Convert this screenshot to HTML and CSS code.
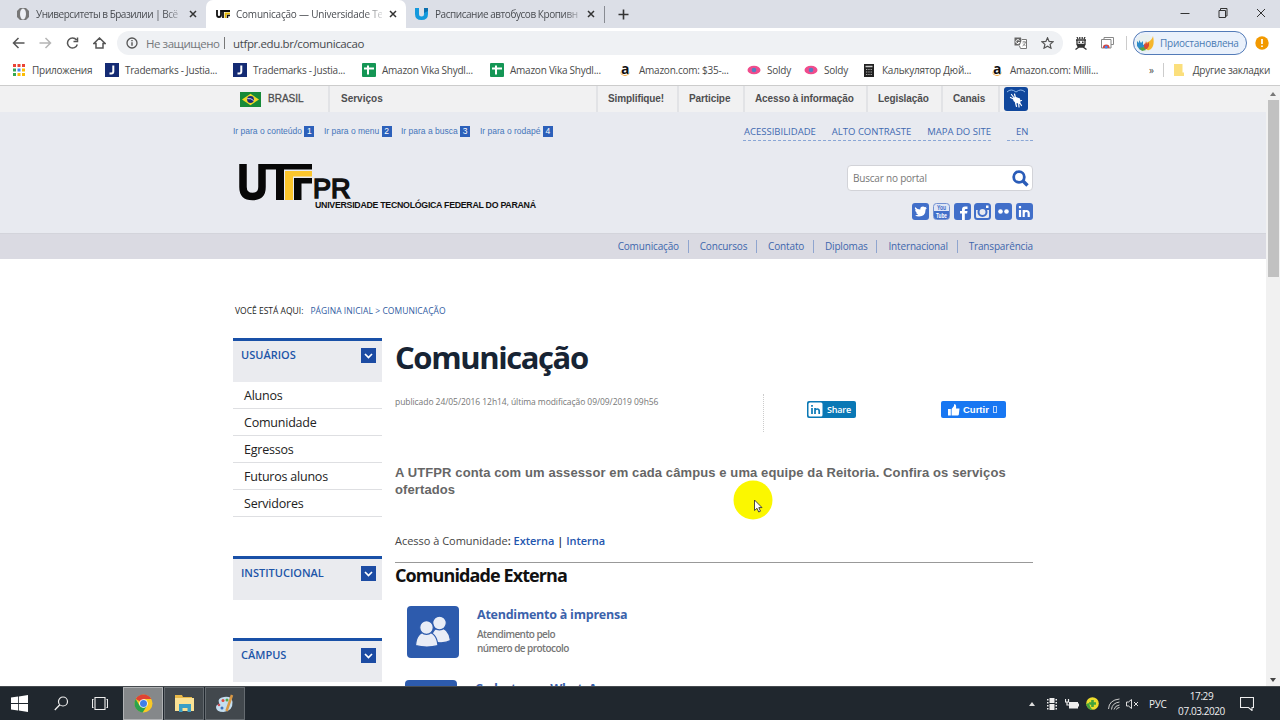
FILE: index.html
```html
<!DOCTYPE html>
<html lang="pt-br">
<head>
    <meta charset="UTF-8">
    <meta name="viewport" content="width=device-width, initial-scale=1.0">
    <title>Comunicação — Universidade Tecnológica Federal do Paraná</title>
    <link rel="stylesheet" href="styles.css">
</head>
<body>
    <!-- tabs -->
    <div class="tabs">
        <div class="tab tab-first">
            <svg width="14" height="14" viewBox="0 0 14 14"><path fill="#777" d="M4 1h6l3 3v6l-3 3H4l-3-3V4z"/><ellipse cx="7" cy="7" rx="3" ry="5.5" fill="#eef0f5"/></svg>
            <span class="tab-title t1">Университеты в Бразилии | Всё</span>
            <svg class="close" width="8" height="8" viewBox="0 0 8 8"><path d="M1 1l6 6M7 1L1 7"/></svg>
        </div>
        <div class="tab tab-active">
            <svg width="14" height="8" viewBox="0 0 14 8"><path d="M1 0v5q0 2 2 2t2-2V0M5 1h9M7 1v7" fill="none" stroke="#111" stroke-width="1.8"/><path d="M9.5 8V3.5H14" fill="none" stroke="#e6b800" stroke-width="1.8"/><path d="M11.5 8V5.5H14" fill="none" stroke="#111" stroke-width="1.4"/></svg>
            <span class="tab-title t2">Comunicação — Universidade Te</span>
            <svg class="close" width="8" height="8" viewBox="0 0 8 8"><path d="M1 1l6 6M7 1L1 7"/></svg>
        </div>
        <div class="tab tab-last">
            <svg width="15" height="14" viewBox="0 0 15 14"><path fill="#1499dc" d="M1 1h4v6q0 2.500 2.500 2.500T10 7V1h4v6q0 6-6.500 6T1 7z"/><path fill="#0b6fae" d="M10 1h4v3l-4 2z"/></svg>
            <span class="tab-title t3">Расписание автобусов Кропивн</span>
            <svg class="close" width="8" height="8" viewBox="0 0 8 8"><path d="M1 1l6 6M7 1L1 7"/></svg>
        </div>
        <svg class="new-tab" width="11" height="11" viewBox="0 0 11 11"><path d="M5.500 0.500v10M0.500 5.500h10" stroke="#333" stroke-width="1.600"/></svg>
        <div class="window-buttons">
            <svg width="10" height="10" viewBox="0 0 10 10"><path d="M0.500 5.500h9"/></svg>
            <svg width="10" height="10" viewBox="0 0 10 10"><path d="M1 2.500h6.500V9.500H1zM2.500 2.500V0.500H9v7.500H7.500"/></svg>
            <svg width="10" height="10" viewBox="0 0 10 10"><path d="M1 1l8 8M9 1L1 9"/></svg>
        </div>
    </div>

    <!-- toolbar -->
    <div class="toolbar">
        <div class="nav-buttons">
            <svg width="13" height="12" viewBox="0 0 13 12"><path d="M12.500 6H1.500M6.500 1L1.500 6l5 5"/></svg>
            <svg class="off" width="13" height="12" viewBox="0 0 13 12"><path d="M0.500 6h11M6.500 1l5 5-5 5"/></svg>
            <svg width="13" height="12" viewBox="0 0 13 12"><path d="M10.500 3A5 5 0 1 0 11.300 7.500M11.500 0.500V4.500H7.500"/></svg>
            <svg width="13" height="12" viewBox="0 0 13 12"><path d="M0.800 6.500L6.500 1l5.700 5.500H10V11H3V6.500z"/></svg>
        </div>
        <div class="omnibox">
            <svg width="12" height="12" viewBox="0 0 12 12"><circle cx="6" cy="6" r="5" fill="none" stroke="#555" stroke-width="1.300"/><path d="M6 5.200v3.500M6 3v1.200" stroke="#555" stroke-width="1.400"/></svg>
            <span class="unsafe">Не защищено</span>
            <span class="bar"></span>
            <span class="url">utfpr.edu.br/comunicacao</span>
            <svg class="translate" width="13" height="12" viewBox="0 0 13 12"><path fill="#666" d="M0.500 0.500h6.500l1.500 8H0.500z"/><path d="M8 2.500h4.500v9H6.500l-1-2.500" fill="#fff" stroke="#777"/><path d="M5.500 3.500a2 2 0 1 0 .2 2H4" fill="none" stroke="#fff"/><path d="M8.500 5h3.500M10 4v1M11.500 5q-.5 3-3 4M9 6.500l2.500 2.500" stroke="#777" fill="none" stroke-width=".8"/></svg>
            <svg width="13" height="12" viewBox="0 0 13 12"><path d="M6.500 0.800l1.600 3.600 4 .4-3 2.600.9 3.800-3.500-2-3.500 2 .9-3.800-3-2.600 4-.4z" fill="none" stroke="#555" stroke-width="1.200"/></svg>
        </div>
        <svg class="ext" width="12" height="13" viewBox="0 0 12 13"><path d="M2 0l1 2M4.800 0v2M7.200 0v2M10 0L9 2M1 3h10M2 3v4.500h8V3M2 9h8M0.500 12.500L4 10h4l3.500 2.500" fill="none" stroke="#333" stroke-width="1.300"/><path d="M3.500 5.200h1.600M7 5.200h1.600" stroke="#333" stroke-width="1.400"/></svg>
        <svg class="ext2" width="13" height="12" viewBox="0 0 13 12"><path d="M3 2.500V0.500h9.500v7H10" fill="none" stroke="#888"/><path d="M0.500 2.500H10V11H0.500z" fill="#fff" stroke="#888"/><path d="M1.800 11a3.400 3.400 0 0 1 6.800 0" fill="#d8453a"/><circle cx="5.200" cy="10" r="1.500" fill="#4285f4"/></svg>
        <span class="tool-sep"></span>
        <div class="profile">
            <svg width="18" height="18" viewBox="0 0 18 18"><circle cx="9" cy="9" r="9" fill="#e9f0ef"/><path fill="#f5b62c" d="M8 13q0-4 4-5 4-2 5-6 2 9-2 13-4 3-7-2"/><path fill="#2d8bc9" d="M1 7l2 2V6l2 3 2-2v4l2-1-2 5-3 1-3-4z"/><path fill="#d94a35" d="M8 9l1 2 1-4 1 3 2-2v4l-2 3H8z"/><path fill="#56a245" d="M3 14l5-1 2 3-4 1z"/></svg>
            <span>Приостановлена</span>
        </div>
        <svg class="alert" width="14" height="14" viewBox="0 0 14 14"><circle cx="7" cy="7" r="6.700" fill="#f29900"/><path d="M7 3v5M7 9.500v1.500" stroke="#fff" stroke-width="1.700"/></svg>
    </div>

    <!-- bookmarks -->
    <div class="bookmarks">
        <div class="bm b1"><svg width="12" height="12" viewBox="0 0 12 12"><path fill="#ea4335" d="M0 0h3v3H0zM4.500 0h3v3h-3zM9 0h3v3H9z"/><path fill="#34a853" d="M0 4.500h3v3H0z"/><path fill="#4285f4" d="M4.500 4.500h3v3h-3z"/><path fill="#fbbc05" d="M9 4.500h3v3H9zM4.500 9h3v3h-3zM9 9h3v3H9z"/><path fill="#34a853" d="M0 9h3v3H0z"/></svg><span>Приложения</span></div>
        <div class="bm b2"><svg width="14" height="14" viewBox="0 0 14 14"><path fill="#142b74" d="M0 0h14v14H0z"/><path d="M8.300 2.500V8.500q0 2-2 2H4.500" fill="none" stroke="#fff" stroke-width="2"/></svg><span>Trademarks - Justia...</span></div>
        <div class="bm b3"><svg width="14" height="14" viewBox="0 0 14 14"><path fill="#142b74" d="M0 0h14v14H0z"/><path d="M8.300 2.500V8.500q0 2-2 2H4.500" fill="none" stroke="#fff" stroke-width="2"/></svg><span>Trademarks - Justia...</span></div>
        <div class="bm b4"><svg width="14" height="14" viewBox="0 0 14 14"><rect width="14" height="14" rx="1" fill="#149655"/><path d="M2 5.500h10M6 2.500v9" stroke="#fff" stroke-width="2"/></svg><span>Amazon Vika Shydl...</span></div>
        <div class="bm b5"><svg width="14" height="14" viewBox="0 0 14 14"><rect width="14" height="14" rx="1" fill="#149655"/><path d="M2 5.500h10M6 2.500v9" stroke="#fff" stroke-width="2"/></svg><span>Amazon Vika Shydl...</span></div>
        <div class="bm b6"><b class="amazon">a</b><span>Amazon.com: $35-...</span></div>
        <div class="bm b7"><svg width="14" height="10" viewBox="0 0 14 10"><ellipse cx="7" cy="5" rx="6.500" ry="4.300" fill="#f04c8c"/><circle cx="7" cy="5" r="2.300" fill="#557fc0"/></svg><span>Soldy</span></div>
        <div class="bm b8"><svg width="14" height="10" viewBox="0 0 14 10"><ellipse cx="7" cy="5" rx="6.500" ry="4.300" fill="#f04c8c"/><circle cx="7" cy="5" r="2.300" fill="#557fc0"/></svg><span>Soldy</span></div>
        <div class="bm b9"><svg width="10" height="13" viewBox="0 0 10 13"><path fill="#222" d="M0 0h10v13H0z"/><path d="M1.500 2.500h7" stroke="#ccc" stroke-width="1.500"/><path d="M2 5.500h6M2 8h6M2 10.500h6" stroke="#aaa" stroke-dasharray="1.300 1"/></svg><span>Калькулятор Дюй...</span></div>
        <div class="bm b10"><b class="amazon">a</b><span>Amazon.com: Milli...</span></div>
        <span class="more">»</span>
        <span class="tool-sep"></span>
        <div class="bm b11"><svg width="10" height="12" viewBox="0 0 10 12"><path fill="#fbdf7c" d="M0 0h8.500v8.500H10V12H0z"/></svg><span>Другие закладки</span></div>
    </div>

    <div class="window">
        <div class="page">
            <div class="gov-bar">
                <div class="wrap">
                    <div class="gov brasil">
                        <svg width="21" height="15" viewBox="0 0 21 15"><path fill="#178a38" d="M0 0h21v15H0z"/><path fill="#f2d926" d="M10.500 1.800L19 7.500l-8.500 5.700L2 7.500z"/><circle cx="10.500" cy="7.500" r="3.400" fill="#1d2a78"/><path d="M7.300 6.600q4-.6 6.300 2" stroke="#fff" fill="none" stroke-width=".8"/></svg>
                        <span>BRASIL</span>
                    </div>
                    <div class="gov servicos">Serviços</div>
                    <div class="gov g1">Simplifique!</div>
                    <div class="gov g2">Participe</div>
                    <div class="gov g3">Acesso à informação</div>
                    <div class="gov g4">Legislação</div>
                    <div class="gov g5">Canais</div>
                    <div class="gov libras">
                        <svg width="24" height="24" viewBox="0 0 24 24"><rect width="24" height="24" rx="3" fill="#10479c"/><path d="M3 5q4-4 9 0 5-4 9 0" fill="none" stroke="#9cc4f0" stroke-width=".9"/><path d="M7.500 7.500l3 4M6.500 10.500l4 2M10.500 7l1 4M12.500 19.500l-1-4M15 20l-.5-5M17.500 18.500l-2-3M17.500 13.500l-2 .5" stroke="#fff" stroke-width="1.200" stroke-linecap="round"/><path fill="#fff" d="M9 11l3-1 4 1.500.5 4-4 1-3-2.500z"/></svg>
                    </div>
                </div>
            </div>

            <div class="header">
                <div class="wrap top-links">
                    <div class="skip s1">Ir para o conteúdo <b>1</b></div>
                    <div class="skip s2">Ir para o menu <b>2</b></div>
                    <div class="skip s3">Ir para a busca <b>3</b></div>
                    <div class="skip s4">Ir para o rodapé <b>4</b></div>
                    <div class="access"><span>ACESSIBILIDADE</span><span>ALTO CONTRASTE</span><span>MAPA DO SITE</span></div>
                    <div class="lang">EN</div>
                </div>
                <div class="wrap brand">
                    <div class="logo">
                        <div class="logo-row">
                            <svg width="73" height="37" viewBox="0 0 73 37"><path d="M4 0v23q0 9.500 9.500 9.500T23 23V0" fill="none" stroke="#070707" stroke-width="7.500"/><path fill="#070707" d="M20 0h54v5.500H45V36h-8V5.500H20z"/><path fill="#fbc52c" d="M46 7h27v5.500H54V36h-8z"/><path fill="#070707" d="M55 14h18v5.500H62.500V36H55z"/></svg>
                            <span>PR</span>
                        </div>
                        <div class="logo-name">UNIVERSIDADE TECNOLÓGICA FEDERAL DO PARANÁ</div>
                    </div>
                    <div class="tools">
                        <div class="search">
                            <span>Buscar no portal</span>
                            <svg width="17" height="17" viewBox="0 0 17 17"><circle cx="7" cy="7" r="5.300" fill="none" stroke="#2a5cb8" stroke-width="2.800"/><path d="M11 11l4.500 4.500" stroke="#2a5cb8" stroke-width="3.400"/></svg>
                        </div>
                        <div class="social">
                            <svg width="17" height="17" viewBox="0 0 17 17"><rect width="17" height="17" rx="3"/><path fill="#fff" d="M3 4q2.500 2.500 5.300 2.500Q8 3.500 11 3.500q1.200 0 2 .8l1.500-.5-.8 1.500 1.300-.3-1.400 1.500Q13.500 13.500 7 13.500q-2.400 0-4-1.200 2 .1 3.300-1-2-.3-2.300-1.700h1Q3.200 8.800 3 7l1 .3Q2.300 5.800 3 4z"/></svg>
                            <svg width="17" height="17" viewBox="0 0 17 17"><rect x=".5" y=".5" width="16" height="16" rx="3" fill="#dfe6f5" stroke="#7291d1"/><path d="M1 8h15v6q0 2-2 2H3q-2 0-2-2z"/><text x="8.500" y="7" font-size="7" text-anchor="middle" textLength="9" lengthAdjust="spacingAndGlyphs">You</text><text x="8.500" y="14.500" font-size="7" text-anchor="middle" textLength="11" lengthAdjust="spacingAndGlyphs" class="white">Tube</text></svg>
                            <svg width="17" height="17" viewBox="0 0 17 17"><rect width="17" height="17" rx="3"/><path fill="#fff" d="M8 17v-6.500H6V8h2V6.500Q8 3.500 11 3.500h2.500V6h-1.700q-1 0-1 1v1h2.700l-.4 2.500h-2.300V17z"/></svg>
                            <svg width="17" height="17" viewBox="0 0 17 17"><rect x="1" y="1" width="15" height="15" rx="2.500" fill="none" stroke="#416fc9" stroke-width="2"/><path d="M1 1h15v6h-4q-3-3-7 0H1z"/><circle cx="8.500" cy="9" r="4" fill="#e8eaf0" stroke="#416fc9" stroke-width="2"/><path fill="#fff" d="M12 2.500h2.500V5H12z"/></svg>
                            <svg width="17" height="17" viewBox="0 0 17 17"><rect width="17" height="17" rx="3"/><circle cx="5.500" cy="8.500" r="2.300" fill="#fff"/><circle cx="11.500" cy="8.500" r="2.300" fill="#fff"/></svg>
                            <svg width="17" height="17" viewBox="0 0 17 17"><rect width="17" height="17" rx="3"/><path d="M4 7v7M4 3v2.300M7.700 14V7M7.700 10q.5-2 2.600-2 2.400 0 2.400 2.500V14" fill="none" stroke="#fff" stroke-width="2.200"/></svg>
                        </div>
                    </div>
                </div>
            </div>

            <div class="portal-nav">
                <div class="wrap">
                    <span>Comunicação</span><span>Concursos</span><span>Contato</span><span>Diplomas</span><span>Internacional</span><span>Transparência</span>
                </div>
            </div>

            <div class="wrap breadcrumb"><span class="here">VOCÊ ESTÁ AQUI:</span><span class="path">PÁGINA INICIAL &gt; COMUNICAÇÃO</span></div>

            <div class="wrap columns">
                <div class="sidebar">
                    <div class="menu">
                        <div class="menu-title"><span>USUÁRIOS</span><svg width="15" height="15" viewBox="0 0 15 15"><path fill="#1c4ba3" d="M0 0h15v15H0z"/><path d="M4 6l3.500 3.500L11 6" fill="none" stroke="#fff" stroke-width="1.700"/></svg></div>
                        <ul>
                            <li>Alunos</li>
                            <li>Comunidade</li>
                            <li>Egressos</li>
                            <li>Futuros alunos</li>
                            <li>Servidores</li>
                        </ul>
                    </div>
                    <div class="menu">
                        <div class="menu-title"><span>INSTITUCIONAL</span><svg width="15" height="15" viewBox="0 0 15 15"><path fill="#1c4ba3" d="M0 0h15v15H0z"/><path d="M4 6l3.500 3.500L11 6" fill="none" stroke="#fff" stroke-width="1.700"/></svg></div>
                    </div>
                    <div class="menu">
                        <div class="menu-title"><span>CÂMPUS</span><svg width="15" height="15" viewBox="0 0 15 15"><path fill="#1c4ba3" d="M0 0h15v15H0z"/><path d="M4 6l3.500 3.500L11 6" fill="none" stroke="#fff" stroke-width="1.700"/></svg></div>
                    </div>
                </div>

                <div class="content">
                    <h1>Comunicação</h1>
                    <div class="byline">
                        <span class="date">publicado 24/05/2016 12h14, última modificação 09/09/2019 09h56</span>
                        <div class="share">
                            <div class="in-share"><svg width="15" height="15" viewBox="0 0 15 15"><rect x=".5" y=".5" width="14" height="14" rx="1.500" fill="#fff"/><path d="M4 6v6M4 3v1.700M7 12V6M7 8.500Q7.300 7 9.200 7q2 0 2 2.200V12" fill="none" stroke="#0a78b5" stroke-width="1.700"/></svg><span>Share</span></div>
                            <div class="fb-like"><svg width="12" height="12" viewBox="0 0 12 12"><path fill="#fff" d="M0 5h2.800v6.500H0zM3.600 5L6 2V.3h1q1.500.5 1 4.200h3.500l-.7 6.300-.8.700H3.600z"/></svg><b>Curtir</b><i></i></div>
                        </div>
                    </div>
                    <p class="description">A UTFPR conta com um assessor em cada câmpus e uma equipe da Reitoria. Confira os serviços<br>ofertados</p>
                    <p class="links">Acesso à Comunidade<b>: <a>Externa</a> | <a>Interna</a></b></p>
                    <h2>Comunidade Externa</h2>
                    <div class="card">
                        <svg width="52" height="52" viewBox="0 0 52 52"><rect width="52" height="52" rx="4" fill="#2d5bad"/><g fill="#e9edf6" stroke="#2d5bad" stroke-width="1.200"><path d="M24 37q0-15 8.500-15Q42 22 43.500 34.500q-5 3-13 2z"/><circle cx="32.500" cy="17" r="6.800"/><path d="M8.500 39.500Q9.500 26 19.500 26T31 39.500q-11 3-22.500 0z"/><circle cx="19.500" cy="21.500" r="6.800"/></g></svg>
                        <div class="card-text">
                            <h3>Atendimento à imprensa</h3>
                            <p>Atendimento pelo<br>número de protocolo</p>
                        </div>
                    </div>
                    <div class="card card-next">
                        <svg width="52" height="52" viewBox="0 0 52 52"><rect width="52" height="52" rx="4" fill="#2d5bad"/></svg>
                        <div class="card-text">
                            <h3>Cadastre no WhatsApp</h3>
                        </div>
                    </div>
                </div>
            </div>
        </div>
        <div class="scrollbar">
            <i class="arrow-up"></i>
            <div class="thumb"></div>
            <i class="arrow-down"></i>
        </div>
        <svg class="pointer" width="40" height="40" viewBox="0 0 40 40"><circle cx="20" cy="20" r="19.500" fill="#fbf700"/><path d="M21.500 20v10.500l2.500-2.200 1.700 3.700 1.800-.8-1.700-3.600h3.200z" fill="#fff" stroke="#333" stroke-width=".9"/></svg>
    </div>

    <!-- taskbar -->
    <div class="taskbar">
        <div class="task start"><svg width="17" height="17" viewBox="0 0 17 17"><path fill="#fff" d="M0 2.500l7-1v6.600H0zM7.800 1.400L17 0v8.100H7.800zM0 8.900h7v6.600l-7-1zM7.800 8.900H17V17l-9.200-1.400z"/></svg></div>
        <div class="task"><svg width="15" height="15" viewBox="0 0 15 15"><circle cx="9" cy="5.500" r="4.500" fill="none" stroke="#eee" stroke-width="1.200"/><path d="M5.800 8.800L.8 14" stroke="#eee" stroke-width="1.300"/></svg></div>
        <div class="task view"><svg width="16" height="13" viewBox="0 0 16 13"><path d="M3 .5h10v12H3zM1.500 2.500h-1v8h1M14.500 2.500h1v8h-1" fill="none" stroke="#eee" stroke-width="1.100"/></svg></div>
        <div class="task app app-on"><svg width="19" height="19" viewBox="0 0 19 19"><circle cx="9.500" cy="9.500" r="9" fill="#f9c926"/><path fill="#df4334" d="M9.500 9.500L1.700 5A9 9 0 0 1 17.300 5H9.500z"/><path fill="#2ba24c" d="M1.700 5A9 9 0 0 0 8.700 18.500L13 11.500 9.500 9.500 5.500 11.500z"/><circle cx="9.500" cy="9.500" r="4.300" fill="#fff"/><circle cx="9.500" cy="9.500" r="3.500" fill="#3f7fe8"/></svg></div>
        <div class="task app"><svg width="19" height="17" viewBox="0 0 19 17"><path fill="#e9b949" d="M0 0h7l1 2h9v3H0z"/><path fill="#fbe295" d="M0 3h19v13H0z"/><path fill="#3a9fc6" d="M4 9h12v8h-3.500v-4h-5v4H4z"/></svg></div>
        <div class="task app"><svg width="20" height="19" viewBox="0 0 20 19"><path fill="#c4def0" d="M9 3q8-1 8.500 5 .5 9-9 10Q1 18 1 13q0-2 2-2.500t1-1.500Q2 4 9 3z"/><circle cx="8" cy="6.500" r="1.500" fill="#df4b3d"/><circle cx="4" cy="11" r="1.300" fill="#ca4d56"/><circle cx="12" cy="6" r="1.500" fill="#54a84c"/><circle cx="7" cy="14" r="1.500" fill="#3f72bd"/><path d="M17 1L11.500 17" stroke="#d99845" stroke-width="2.500"/></svg></div>
        <div class="tray">
            <i class="tray-up"></i>
            <svg class="y1" width="10" height="12" viewBox="0 0 10 12"><path fill="#eee" d="M2.500 0h5v5h-5zM2.500 6h5v6h-5zM0 1h1.500v1.500H0zM0 4h1.500v1.500H0zM0 7h1.500v1.500H0zM0 10h1.500v1.500H0zM8.500 1H10v1.500H8.500zM8.500 4H10v1.500H8.500zM8.500 7H10v1.500H8.500zM8.500 10H10v1.500H8.500z"/></svg>
            <svg class="y2" width="14" height="10" viewBox="0 0 14 10"><path fill="#eee" d="M4 3h9v6.500H4zM13 4.500h1v3h-1z"/><path d="M.5 0v3h3V0M2 3v3h3" fill="none" stroke="#eee" stroke-width="1.200"/></svg>
            <svg class="y3" width="13" height="13" viewBox="0 0 13 13"><circle cx="6.500" cy="6.500" r="6.300" fill="#eddc2c"/><path fill="#42a33b" d="M0 7q2 6 7 6-3-2-4-7zM5.200 3h2.600v2.200H10v2.600H7.800V10H5.200V7.800H3V5.200h2.200z"/></svg>
            <svg class="y4" width="12" height="12" viewBox="0 0 12 12"><path d="M.5 11Q1 2 11.500 1M3.500 11.500Q4 5 11.500 4M6 11.500Q7 7.500 11.500 7M8.500 11.500q.5-2 3-2" fill="none" stroke="#ccc"/></svg>
            <svg class="y5" width="13" height="10" viewBox="0 0 13 10"><path d="M.5 3h2l3-2.500v9L2.500 7h-2zM8 3l4 4M12 3L8 7" fill="none" stroke="#ddd"/></svg>
            <span class="kbd">РУС</span>
            <div class="clock"><div class="time">17:29</div><div class="day">07.03.2020</div></div>
            <svg class="y6" width="14" height="14" viewBox="0 0 14 14"><path d="M.5.500h13v10H12v3L8.500 10.500h-8z" fill="none" stroke="#eee" stroke-width="1.100"/></svg>
        </div>
    </div>
</body>
</html>
```
FILE: styles.css
```css
* {
    box-sizing: border-box;
}

body {
    display: flex;
    flex-direction: column;
    height: 720px;
    margin: 0;
    overflow: hidden;
    background-color: #fff;
    font-family: "Open Sans", "Noto Sans", sans-serif;
    white-space: nowrap;
}

svg {
    display: block;
    flex-shrink: 0;
}

h1, h2, h3, p, ul {
    margin: 0;
    padding: 0;
}

/* Browser tabs */
.tabs {
    display: flex;
    align-items: center;
    height: 28px;
    flex-shrink: 0;
    background-color: #dcdfe7;
}

.tab {
    display: flex;
    align-items: center;
    height: 28px;
    font-size: 10px;
    color: #4a4d52;
}

.tab-first {
    width: 206px;
    padding-left: 16px;
}

.tab-active {
    width: 200px;
    padding-left: 10px;
    border-radius: 7px 7px 0 0;
    background-color: #fff;
}

.tab-last {
    width: 199px;
    height: 17px;
    padding-left: 8px;
    border-right: 1px solid #888b92;
}

.tab-title {
    width: 146px;
    margin: 0 7px 0 6px;
    -webkit-mask-image: linear-gradient(90deg, #000 88%, rgba(0, 0, 0, .2));
}

.t1 { letter-spacing: -.5px; }
.t2 { letter-spacing: -.22px; }
.t3 { margin-right: 6px; letter-spacing: -.45px; }

.close {
    fill: none;
    stroke: #333;
    stroke-width: 1.5;
}

.new-tab {
    margin-left: 13px;
}

.window-buttons {
    display: flex;
    gap: 28px;
    margin: -3px 14px 0 auto;
    fill: none;
    stroke: #333;
}

/* Toolbar */
.toolbar {
    display: flex;
    align-items: center;
    height: 30px;
    flex-shrink: 0;
}

.nav-buttons {
    display: flex;
    gap: 14px;
    width: 117px;
    padding-left: 12px;
    fill: none;
    stroke: #555;
    stroke-width: 1.5;
}

.nav-buttons .off {
    stroke: #b5b5b5;
}

.omnibox {
    display: flex;
    align-items: center;
    width: 946px;
    height: 24px;
    padding-left: 9px;
    border-radius: 12px;
    background-color: #eff1f4;
    font-size: 11.5px;
}

.unsafe {
    width: 74px;
    margin-left: 8px;
    color: #74777b;
    letter-spacing: -.45px;
}

.bar {
    width: 1px;
    height: 12px;
    margin: 0 8px 0 4px;
    background-color: #777;
}

.url {
    color: #46494d;
    letter-spacing: -.38px;
}

.translate {
    margin: 0 14px 0 auto;
}

.omnibox svg:last-child {
    margin-right: 9px;
}

.ext {
    margin-left: 12px;
}

.ext2 {
    margin-left: 14px;
}

.tool-sep {
    width: 1px;
    height: 14px;
    background-color: #ccc;
}

.toolbar .tool-sep {
    margin: 0 6px 0 12px;
}

.profile {
    display: flex;
    align-items: center;
    gap: 6px;
    width: 114px;
    height: 24px;
    padding-left: 2px;
    border: 1px solid #537bb8;
    border-radius: 12px;
    background-color: #eaf1fb;
    color: #4b7cb4;
    font-size: 10px;
    letter-spacing: -.25px;
}

.alert {
    margin-left: 8px;
}

/* Bookmarks */
.bookmarks {
    display: flex;
    align-items: center;
    height: 28px;
    padding: 0 0 3px 13px;
    flex-shrink: 0;
    border-bottom: 1px solid #ccc;
    color: #4a4a4a;
    font-size: 10px;
    letter-spacing: -.24px;
}

.bm {
    display: flex;
    align-items: center;
    gap: 6px;
}

.b1 { width: 92px; gap: 7px; }
.b2 { width: 128px; }
.b3 { width: 129px; }
.b4 { width: 128px; }
.b5 { width: 130px; }
.b6 { width: 127px; gap: 9px; }
.b7 { width: 57px; }
.b8 { width: 60px; }
.b9 { width: 128px; gap: 8px; }
.b10 { width: 157px; gap: 8px; }
.b11 { gap: 9px; }

.amazon {
    width: 10px;
    height: 12px;
    border-bottom: 1px solid #eda33a;
    border-radius: 0 0 5px 5px;
    color: #111;
    font-size: 14px;
    line-height: 9px;
    text-align: center;
}

.bookmarks .tool-sep {
    margin: 0 10px 0 9px;
}

/* Page area */
.window {
    display: flex;
    position: relative;
    height: 600px;
    flex-shrink: 0;
    overflow: hidden;
}

.page {
    width: 1266px;
    height: 600px;
    overflow: hidden;
}

.wrap {
    display: flex;
    width: 800px;
    margin: 0 auto;
}

.gov-bar {
    height: 26px;
    background-color: #f1f1f2;
}

.gov {
    height: 26px;
    padding-left: 10px;
    border-left: 2px solid #e2e3e6;
    color: #4e4e50;
    font-family: "Liberation Sans", sans-serif;
    font-size: 10px;
    font-weight: bold;
    letter-spacing: -.1px;
    line-height: 26px;
}

.brasil {
    display: flex;
    align-items: center;
    gap: 7px;
    width: 95px;
    padding-left: 7px;
    border-left: none;
    font-weight: normal;
    letter-spacing: 0;
    -webkit-text-stroke: .3px #4e4e50;
}

.servicos {
    width: 268px;
    padding-left: 11px;
    letter-spacing: 0;
}

.g1 { width: 81px; }
.g2 { width: 66px; }
.g3 { width: 123px; }
.g4 { width: 75px; }
.g5 { width: 57px; }

.libras {
    padding: 1px 0 0 4px;
}

/* Header */
.header {
    height: 121px;
    background-color: #e8eaf0;
}

.top-links {
    align-items: center;
    height: 38px;
    font-size: 9.5px;
}

.skip {
    color: #4575ba;
    font-family: "Liberation Sans", sans-serif;
    font-size: 8.5px;
}

.skip b {
    display: inline-block;
    width: 10px;
    height: 11px;
    background-color: #2c60ba;
    color: #fff;
    font-weight: normal;
    line-height: 11px;
    text-align: center;
}

.s1 { width: 91px; }
.s2 { width: 77px; }
.s3 { width: 79px; }
.s4 { width: 80px; }

.access {
    display: flex;
    gap: 16px;
    width: 248px;
    height: 19px;
    margin: 0 16px 0 auto;
    padding-left: 1px;
    border-bottom: 1px dashed #8aa7d6;
    color: #3f69b0;
    line-height: 19px;
}

.lang {
    width: 26px;
    height: 19px;
    padding-left: 9px;
    border-bottom: 1px dashed #8aa7d6;
    color: #3f69b0;
    line-height: 19px;
}

.brand {
    justify-content: space-between;
}

.logo {
    width: 310px;
    padding: 14px 0 0 6px;
}

.logo-row {
    display: flex;
    align-items: flex-start;
    height: 37px;
}

.logo-row span {
    margin: 13px 0 0 1px;
    color: #111;
    font-family: "Liberation Sans", sans-serif;
    font-size: 27px;
    -webkit-text-stroke: 1.6px #111;
    line-height: 24px;
}

.logo-name {
    margin: 1px 0 0 76px;
    color: #111;
    font-family: "Liberation Sans", sans-serif;
    font-size: 8.8px;
    font-weight: bold;
    letter-spacing: -.28px;
    line-height: 7px;
}

.tools {
    padding-top: 15px;
}

.search {
    display: flex;
    align-items: center;
    justify-content: space-between;
    width: 186px;
    height: 26px;
    padding: 0 3px 0 5px;
    border: 1px solid #d2d3d8;
    border-radius: 4px;
    background-color: #fff;
    color: #777;
    font-size: 10px;
    letter-spacing: -.2px;
}

.social {
    display: flex;
    justify-content: flex-end;
    gap: 3.8px;
    margin-top: 12px;
    fill: #416fc9;
    font-family: "Liberation Sans", sans-serif;
    font-weight: bold;
}

.social .white {
    fill: #fff;
}

.portal-nav {
    height: 26px;
    border-top: 1px solid #d3d4db;
    background-color: #dadae2;
}

.portal-nav .wrap {
    align-items: center;
    justify-content: flex-end;
    height: 24px;
    color: #4067ad;
    font-size: 10px;
    letter-spacing: -.16px;
}

.portal-nav span {
    padding-left: 11px;
    line-height: 13px;
}

.portal-nav span:not(:last-child) {
    padding-right: 8.8px;
    border-right: 1px solid #8fa5cf;
}

/* Main columns */
.breadcrumb {
    height: 79px;
    padding: 44px 0 0 2px;
    color: #222;
    font-size: 8.5px;
    line-height: 16px;
}

.path {
    margin-left: 7px;
    color: #2f5b9f;
    letter-spacing: .06px;
}

.sidebar {
    width: 149px;
    margin-right: 13px;
}

.menu {
    margin-bottom: 38px;
}

.menu-title {
    display: flex;
    justify-content: space-between;
    height: 44px;
    padding: 7px 6px 0 8px;
    border-top: 3px solid #1950a7;
    background-color: #eaebef;
    color: #1d55a8;
    font-size: 11px;
    font-weight: 600;
    line-height: 13px;
}

.menu ul {
    margin-bottom: 39px;
    list-style: none;
}

.menu li {
    height: 27px;
    padding-left: 11px;
    border-bottom: 1px solid #dedfe2;
    color: #222;
    font-size: 12.5px;
    letter-spacing: -.22px;
    line-height: 27px;
}

.content {
    width: 638px;
}

h1 {
    height: 56px;
    color: #172434;
    font-size: 31px;
    letter-spacing: -1.4px;
    line-height: 38px;
}

.byline {
    display: flex;
    height: 39px;
    color: #777;
    font-size: 8.5px;
}

.date {
    width: 368px;
    letter-spacing: -.06px;
    line-height: 15px;
}

.share {
    display: flex;
    width: 243px;
    height: 38px;
    padding-top: 7px;
    border-left: 1px dotted #ccc;
}

.in-share {
    display: flex;
    align-items: center;
    width: 49px;
    height: 17px;
    margin-left: 43px;
    padding-left: 1px;
    border-radius: 2px;
    background-color: #0a78b5;
    color: #fff;
    font-size: 9px;
    font-weight: 600;
    letter-spacing: -.2px;
    gap: 4px;
}

.fb-like {
    display: flex;
    align-items: center;
    gap: 3px;
    width: 65px;
    height: 17px;
    margin-left: 85px;
    padding-left: 7px;
    border-radius: 2px;
    background-color: #1877f2;
    color: #fff;
    font-family: "Liberation Sans", sans-serif;
    font-size: 9.5px;
}

.fb-like i {
    width: 4px;
    height: 7px;
    margin-left: 1px;
    border: 1px solid #b8d4fb;
}

.description {
    height: 34px;
    margin-top: 31px;
    color: #666;
    font-family: "Liberation Sans", sans-serif;
    font-size: 13px;
    font-weight: bold;
    letter-spacing: .105px;
    line-height: 17px;
}

.links {
    height: 31px;
    margin-top: 34px;
    border-bottom: 1px solid #999;
    color: #444;
    font-size: 11px;
    letter-spacing: -.02px;
    line-height: 17px;
}

.links b {
    font-weight: 600;
    color: #222;
}

.links a {
    color: #1f56ae;
}

h2 {
    height: 43px;
    color: #111;
    font-size: 18px;
    letter-spacing: -.9px;
    line-height: 24px;
}

.card {
    display: flex;
    gap: 18px;
    height: 74px;
    padding-left: 12px;
}

.card-next {
    padding-left: 10px;
}

h3 {
    color: #3b62ab;
    font-size: 12.5px;
    letter-spacing: -.24px;
    line-height: 18px;
}

.card-text p {
    margin-top: 4px;
    color: #777;
    font-size: 10px;
    font-weight: 600;
    letter-spacing: -.55px;
    line-height: 13.5px;
}

/* Scrollbar */
.scrollbar {
    display: flex;
    flex-direction: column;
    align-items: center;
    width: 14px;
    height: 600px;
    padding: 6px 0 4px;
    background-color: #f1f1f1;
}

.thumb {
    width: 11px;
    height: 177px;
    margin-top: 4px;
    background-color: #c1c1c1;
}

.arrow-up, .arrow-down, .tray-up {
    border: 3px solid transparent;
}

.arrow-up {
    border-top: none;
    border-bottom: 4px solid #777;
}

.arrow-down {
    margin-top: auto;
    border-bottom: none;
    border-top: 4px solid #444;
}

.pointer {
    position: absolute;
    left: 733px;
    top: 394px;
}

/* Taskbar */
.taskbar {
    display: flex;
    height: 34px;
    flex-shrink: 0;
    border-top: 1px solid #454a4e;
    background-color: #20272e;
    color: #eee;
}

.task {
    display: flex;
    align-items: center;
    justify-content: center;
    width: 41px;
}

.start {
    padding-right: 2px;
}

.view {
    padding-right: 6px;
}

.app {
    width: 40px;
    margin-right: 1px;
    border: 1px solid #656b70;
    background-color: #42484d;
}

.app-on {
    border-color: #b1b3b5;
    background-color: #85888a;
}

.tray {
    display: flex;
    align-items: center;
    margin-left: auto;
    font-size: 10px;
}

.tray-up {
    border-top: none;
    border-bottom: 4px solid #ddd;
}

.y1 { margin-left: 12px; }
.y2 { margin-left: 8px; }
.y3 { margin-left: 7px; }
.y4 { margin-left: 9px; }
.y5 { margin-left: 6px; }
.y6 { margin: 0 26px 0 15px; }

.kbd {
    width: 18px;
    margin-left: 10px;
    letter-spacing: -.3px;
}

.clock {
    width: 47px;
    margin-left: 11px;
    letter-spacing: -.42px;
    line-height: 15px;
    text-align: center;
}
```
